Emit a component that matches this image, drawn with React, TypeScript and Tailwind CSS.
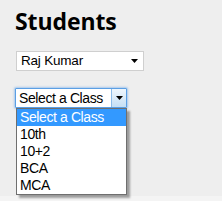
const CLASSES = ['Select a Class', '10th', '10+2', 'BCA', 'MCA'];

function Caret({ className = '' }: { className?: string }) {
  return (
    <svg width="7" height="4" viewBox="0 0 7 4" className={className}>
      <path d="M0 0h7L3.5 4z" fill="#000" />
    </svg>
  );
}

export default function App() {
  return (
    <div className="w-[222px] h-[201px] bg-[#eeeeee] flex flex-col overflow-hidden" style={{ fontFamily: '"Liberation Sans", Arial, sans-serif' }}>
      <div className="flex-1 pl-[15px] pt-[6px]">
        <h1 className="text-[23px] leading-[30px] font-bold text-black tracking-[-0.1px]" style={{ fontFamily: '"Open Sans", sans-serif' }}>
          Students
        </h1>

        <div className="mt-[15px] ml-[1px] w-[128px] h-[20px] bg-white border border-[#cfcfcf] flex items-center justify-between pl-[4px] pr-[5px]">
          <span className="text-[13.5px] leading-none text-black tracking-[-0.2px]">Raj Kumar</span>
          <Caret />
        </div>

        <div className="relative mt-[17px] w-[112px]">
          <div className="h-[20px] bg-white border border-[#5b9fe4] shadow-[0_0_2px_1px_rgba(120,175,235,0.6)] rounded-[1px] flex items-stretch">
            <span className="flex-1 pl-[3px] text-[14px] leading-[18px] text-black tracking-[-0.4px] whitespace-nowrap">Select a Class</span>
            <div className="w-[15px] border-l border-[#8cbcea] bg-gradient-to-b from-[#eef6fd] to-[#c5dff5] flex items-center justify-center">
              <Caret />
            </div>
          </div>

          <ul className="absolute left-[1px] top-[20px] w-[111px] bg-white border border-[#6f6f6f] shadow-[3px_3px_2px_rgba(0,0,0,0.35)]">
            {CLASSES.map((c, i) => (
              <li
                key={c}
                className={`h-[17px] pl-[3px] text-[14px] leading-[17px] tracking-[-0.4px] whitespace-nowrap ${i === 0 ? 'bg-[#3399ff] text-white' : 'text-black'}`}
              >
                {c}
              </li>
            ))}
          </ul>
        </div>
      </div>
      <div className="h-[5px] bg-[#f4f4f4]" />
    </div>
  );
}
